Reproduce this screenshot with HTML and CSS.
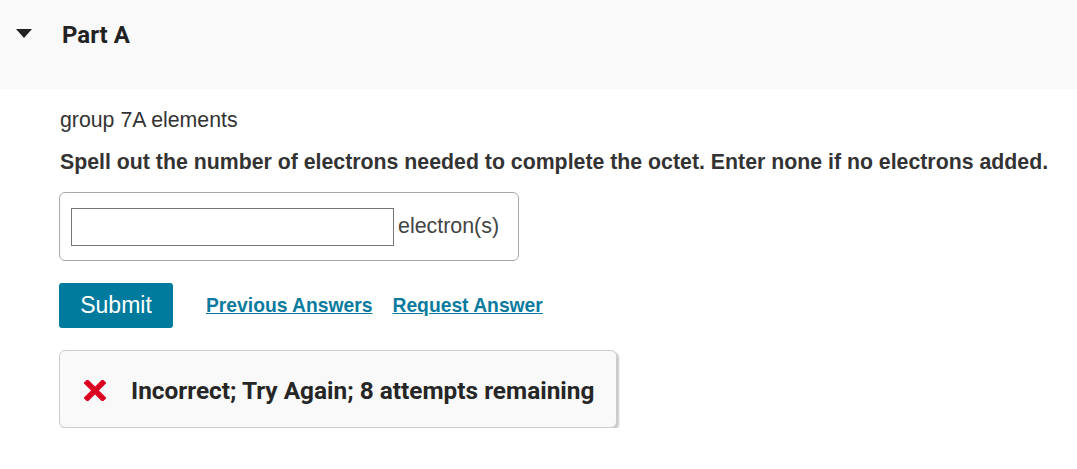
FILE: index.html
```html
<!DOCTYPE html>
<html>
<head>
<meta charset="utf-8">
<link rel="stylesheet" href="styles.css">
</head>
<body>
<div class="part-header">
  <span class="caret"></span>
  <h2 class="part-title">Part A</h2>
</div>
<div class="part-body">
  <p class="prompt">group 7A elements</p>
  <p class="instruction">Spell out the number of electrons needed to complete the octet. Enter none if no electrons added.</p>
  <div class="answer-box">
    <input class="answer-input" type="text">
    <span class="unit">electron(s)</span>
  </div>
  <div class="actions">
    <button class="submit">Submit</button>
    <a class="link" href="#">Previous Answers</a>
    <a class="link" href="#">Request Answer</a>
  </div>
  <div class="feedback">
    <svg class="x-icon" width="22" height="21" viewBox="0 0 22 21">
      <path d="M3.5 3 L18.5 18 M18.5 3 L3.5 18" stroke="#dc0020" stroke-width="5.5" stroke-linecap="square"/>
    </svg>
    <span class="feedback-text">Incorrect; Try Again; 8 attempts remaining</span>
  </div>
</div>
</body>
</html>
```
FILE: styles.css
```css
html, body {
  margin: 0;
  padding: 0;
  background: #ffffff;
  color: #333333;
  font-family: "Liberation Sans", Arial, sans-serif;
}
.part-header {
  height: 89px;
  background: #f9f9f9;
  display: flex;
  align-items: flex-start;
  padding: 0 0 0 16px;
  box-sizing: border-box;
}
.caret {
  width: 0;
  height: 0;
  border-left: 8.5px solid transparent;
  border-right: 8.5px solid transparent;
  border-top: 9px solid #222222;
  margin-top: 29px;
}
.part-title {
  margin: 20px 0 0 30px;
  font-family: Roboto, "Liberation Sans", sans-serif;
  font-weight: 700;
  font-size: 24px;
  line-height: 30px;
  color: #222222;
}
.part-body {
  padding: 0 0 0 60px;
}
.prompt {
  margin: 0;
  padding-top: 19px;
  font-size: 21.3px;
  line-height: 24px;
  color: #333333;
}
.instruction {
  margin: 18px 0 0 0;
  font-size: 21.3px;
  font-weight: 700;
  line-height: 24px;
  color: #333333;
  white-space: nowrap;
}
.answer-box {
  margin: 18px 0 0 -1px;
  width: 460px;
  height: 69px;
  box-sizing: border-box;
  border: 1px solid #aaaaaa;
  border-radius: 6px;
  display: flex;
  align-items: center;
  padding-left: 11px;
}
.answer-input {
  width: 323px;
  height: 38px;
  box-sizing: border-box;
  border: 1px solid #767676;
  margin: 0;
  padding: 0;
  background: #fff;
  outline: none;
}
.unit {
  margin-left: 4px;
  font-size: 21.4px;
  color: #444444;
}
.actions {
  margin: 22px 0 0 -1px;
  display: flex;
  align-items: center;
}
.submit {
  width: 114px;
  height: 45px;
  background: #007b9d;
  color: #ffffff;
  border: none;
  border-radius: 3px;
  font-family: "Liberation Sans", Arial, sans-serif;
  font-size: 23px;
  padding: 0;
  margin: 0 33px 0 0;
}
.link {
  font-size: 19.3px;
  font-weight: 700;
  color: #0a7b9e;
  text-decoration: underline;
  margin-right: 20px;
}
.feedback {
  margin: 22px 0 0 -1px;
  width: 558px;
  height: 78px;
  box-sizing: border-box;
  background: #f9f9f9;
  border: 1px solid #cccccc;
  border-radius: 6px;
  box-shadow: 2px 2px 2px rgba(0,0,0,0.22);
  display: flex;
  align-items: center;
  padding-left: 24px;
  padding-top: 2px;
}
.x-icon {
  display: block;
  margin-right: 25px;
}
.feedback-text {
  font-family: Roboto, "Liberation Sans", sans-serif;
  font-weight: 700;
  font-size: 24.4px;
  color: #262626;
}
```
